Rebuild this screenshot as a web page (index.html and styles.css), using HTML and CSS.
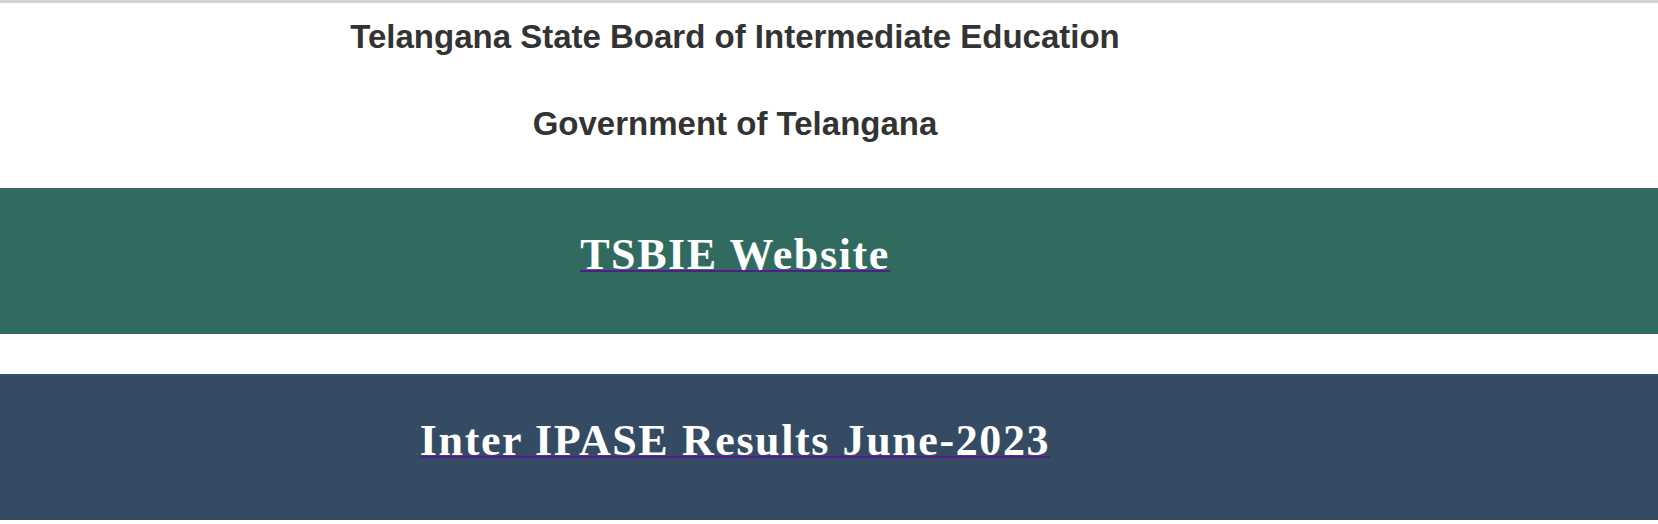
FILE: index.html
```html
<!DOCTYPE html>
<html lang="en">
<head>
    <meta charset="UTF-8">
    <meta name="viewport" content="width=device-width, initial-scale=1.0">
    <title>TSBIE Results</title>
    <link rel="stylesheet" href="styles.css">
</head>
<body>
    <div class="header">
        <h2>Telangana State Board of Intermediate Education</h2>
        <h2 class="sub">Government of Telangana</h2>
    </div>
    <div class="band green">
        <a href="#">TSBIE Website</a>
    </div>
    <div class="band blue">
        <a href="#">Inter IPASE Results June-2023</a>
    </div>
</body>
</html>
```

FILE: styles.css
```css
body {
    margin: 0;
    padding: 0;
    border-top: 3px solid #d3d3d3;
    background-color: #fff;
}
.header {
    padding-right: 188px;
    text-align: center;
    font-family: "Liberation Sans", Arial, sans-serif;
    color: #333;
}
.header h2 {
    margin: 15px 0 0 0;
    font-size: 33px;
    line-height: 38px;
    font-weight: bold;
}
.header h2.sub {
    margin-top: 49px;
    margin-bottom: 45px;
}
.band {
    padding: 43px 188px 55px 0;
    text-align: center;
    font-family: "Liberation Serif", Georgia, serif;
    font-size: 44px;
    line-height: 48px;
    font-weight: bold;
    letter-spacing: 1.6px;
}
.band a {
    color: #fff;
    text-decoration: underline;
    text-decoration-color: #551a8b;
    text-decoration-thickness: 2px;
}
.green {
    background-color: #316b5f;
}
.blue {
    background-color: #354b63;
    margin-top: 40px;
}
```
